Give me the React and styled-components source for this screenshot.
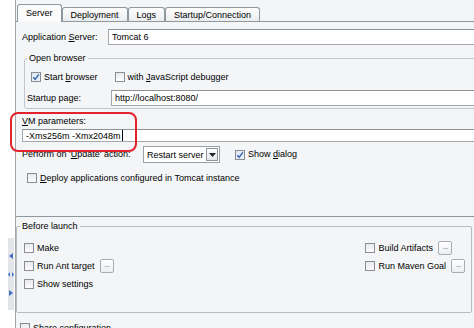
import React from "react";
import styled, { createGlobalStyle } from "styled-components";

const GlobalStyle = createGlobalStyle`
  html, body {
    margin: 0;
    padding: 0;
    background: #fff;
  }
  body {
    font-family: "Liberation Sans", Arial, sans-serif;
    font-size: 9px;
    color: #000;
  }
  * {
    box-sizing: border-box;
  }
`;

function Check({ checked }) {
  return (
    <Box $checked={checked}>
      {checked && (
        <svg width="8" height="8" viewBox="0 0 8 8">
          <path d="M1.2 4.2 L3.2 6.3 L6.9 1.4" fill="none" stroke="#3b6db0" strokeWidth="1.5" />
        </svg>
      )}
    </Box>
  );
}

function CheckItem({ checked, children }) {
  return (
    <Item>
      <Check checked={checked} />
      <span>{children}</span>
    </Item>
  );
}

function App() {
  return (
    <>
      <GlobalStyle />
      <Root>
        <Gutter>
          <SideStrip>
            <svg width="4" height="6" viewBox="0 0 4 6">
              <path d="M4 0 L0 3 L4 6 Z" fill="#3f72c8" />
            </svg>
            <svg width="6" height="5" viewBox="0 0 6 5">
              <path d="M0 2.5 L2 0 L2 5 Z M6 2.5 L4 0 L4 5 Z" fill="#3f72c8" />
            </svg>
            <svg width="4" height="6" viewBox="0 0 4 6">
              <path d="M0 0 L4 3 L0 6 Z" fill="#3f72c8" />
            </svg>
          </SideStrip>
        </Gutter>

        <Main>
          <TabBar>
            <Tab $active>Server</Tab>
            <Tab>Deployment</Tab>
            <Tab>Logs</Tab>
            <Tab>Startup/Connection</Tab>
          </TabBar>

          <TabPanel>
            <Row>
              <Label $width={86}>
                Application <U>S</U>erver:
              </Label>
              <TextField>Tomcat 6</TextField>
            </Row>

            <Group>
              <Legend>Open browser</Legend>
              <CheckLine>
                <CheckItem checked>
                  Start <U>b</U>rowser
                </CheckItem>
                <CheckItem>
                  with <U>J</U>avaScript debugger
                </CheckItem>
              </CheckLine>
              <Row $top={7}>
                <Label $width={84}>Startup page:</Label>
                <TextField>http://localhost:8080/</TextField>
              </Row>
            </Group>

            <VmSection>
              <Highlight />
              <Label>
                <U>V</U>M parameters:
              </Label>
              <TextField $top={2}>
                -Xms256m -Xmx2048m
                <Caret />
              </TextField>
            </VmSection>

            <Row $top={4}>
              <Label $width={121}>
                Perform on '<U>U</U>pdate' action:
              </Label>
              <Select>
                <span>Restart server</span>
                <DropButton>
                  <svg width="7" height="4" viewBox="0 0 7 4">
                    <path d="M0 0 L7 0 L3.5 4 Z" fill="#222" />
                  </svg>
                </DropButton>
              </Select>
              <Spacer $w={15} />
              <CheckItem checked>
                Show <U>d</U>ialog
              </CheckItem>
            </Row>

            <CheckLine $top={9} $left={5}>
              <CheckItem>
                <U>D</U>eploy applications configured in Tomcat instance
              </CheckItem>
            </CheckLine>
          </TabPanel>

          <LaunchGroup>
            <LaunchLegend>Before launch</LaunchLegend>
            <LaunchColumns>
              <LaunchCol>
                <LaunchItem>
                  <CheckItem>Make</CheckItem>
                </LaunchItem>
                <LaunchItem>
                  <CheckItem>Run Ant target</CheckItem>
                  <Dots>···</Dots>
                </LaunchItem>
                <LaunchItem>
                  <CheckItem>Show settings</CheckItem>
                </LaunchItem>
              </LaunchCol>
              <LaunchCol>
                <LaunchItem>
                  <CheckItem>Build Artifacts</CheckItem>
                  <Dots>···</Dots>
                </LaunchItem>
                <LaunchItem>
                  <CheckItem>Run Maven Goal</CheckItem>
                  <Dots>···</Dots>
                </LaunchItem>
              </LaunchCol>
            </LaunchColumns>
          </LaunchGroup>

          <CheckLine $top={9} $left={4}>
            <CheckItem>Share configuration</CheckItem>
          </CheckLine>
        </Main>
      </Root>
    </>
  );
}

const Root = styled.div`
  width: 474px;
  height: 328px;
  overflow: hidden;
  display: flex;
  background: #fff;
`;

const Gutter = styled.div`
  width: 16px;
  flex-shrink: 0;
  border-right: 1px solid #a3a6ab;
  padding: 238px 0 0 8px;
  background: #fff;
`;

const SideStrip = styled.div`
  width: 6px;
  height: 72px;
  background: #e3e5e9;
  display: flex;
  flex-direction: column;
  align-items: center;
  gap: 13px;
  padding-top: 15px;
`;

const Main = styled.div`
  flex: 1;
  min-width: 0;
  background: #f4f5f7;
`;

const TabBar = styled.div`
  display: flex;
  align-items: flex-end;
  height: 21px;
  padding-left: 1px;
`;

const Tab = styled.div`
  position: relative;
  z-index: ${(p) => (p.$active ? 2 : 1)};
  height: ${(p) => (p.$active ? "18px" : "14px")};
  margin-bottom: ${(p) => (p.$active ? "-1px" : "0")};
  padding: 0 8px ${(p) => (p.$active ? "2px" : "0")};
  display: flex;
  align-items: center;
  border: 1px solid #8e989f;
  border-bottom: none;
  border-radius: 3px 3px 0 0;
  background: ${(p) =>
    p.$active ? "#fbfbfc" : "linear-gradient(#fefefe, #ebecee)"};
  white-space: nowrap;
`;

const TabPanel = styled.div`
  width: 540px;
  height: 196px;
  border: 1px solid #8e989f;
  border-left: none;
  padding: 7px 0 0 6px;
  background: #f4f5f7;
`;

const Row = styled.div`
  display: flex;
  align-items: center;
  margin-top: ${(p) => p.$top || 0}px;
`;

const Label = styled.span`
  display: block;
  width: ${(p) => (p.$width ? `${p.$width}px` : "auto")};
  flex-shrink: 0;
  line-height: 11px;
  white-space: nowrap;
`;

const U = styled.span`
  text-decoration: underline;
`;

const TextField = styled.div`
  flex: 1;
  height: 16px;
  margin-top: ${(p) => p.$top || 0}px;
  display: flex;
  align-items: center;
  padding: 0 3px;
  background: #fff;
  border: 1px solid #a3a8ae;
  border-top-color: #8d9298;
  white-space: nowrap;
`;

const Caret = styled.span`
  display: inline-block;
  width: 1px;
  height: 11px;
  background: #000;
  margin-left: 1px;
`;

const Group = styled.fieldset`
  margin: 8px 0 0 2px;
  padding: 0 0 2px 2px;
  border: 1px solid #c3c7cd;
  border-radius: 3px;
`;

const Legend = styled.legend`
  padding: 0 2px;
  line-height: 11px;
`;

const CheckLine = styled.div`
  display: flex;
  align-items: center;
  gap: 17px;
  height: 12px;
  margin-top: ${(p) => (p.$top !== undefined ? p.$top : 7)}px;
  margin-left: ${(p) => (p.$left !== undefined ? p.$left : 4)}px;
`;

const Item = styled.label`
  display: flex;
  align-items: center;
  gap: 3px;
  white-space: nowrap;
  line-height: 11px;
`;

const Box = styled.span`
  width: 10px;
  height: 10px;
  flex-shrink: 0;
  display: flex;
  align-items: center;
  justify-content: center;
  border: 1px solid #8a8e94;
  background: ${(p) =>
    p.$checked ? "linear-gradient(#dfe8f4, #eef3fa)" : "linear-gradient(#e9eaec, #fdfdfd)"};
`;

const VmSection = styled.div`
  position: relative;
  margin-top: 7px;
  display: flex;
  flex-direction: column;
`;

const Highlight = styled.div`
  position: absolute;
  left: -12px;
  top: -4px;
  width: 127px;
  height: 40px;
  border: 2px solid #e3232c;
  border-radius: 8px;
  pointer-events: none;
  z-index: 3;
`;

const Select = styled.div`
  width: 77px;
  height: 17px;
  flex-shrink: 0;
  display: flex;
  align-items: center;
  justify-content: space-between;
  padding: 0 1px 0 3px;
  background: #fff;
  border: 1px solid #9ca1a7;
  white-space: nowrap;
`;

const DropButton = styled.span`
  width: 12px;
  height: 13px;
  display: flex;
  align-items: center;
  justify-content: center;
  border: 1px solid #8f959c;
  background: linear-gradient(#fdfdfd, #e3e5e8);
`;

const Spacer = styled.span`
  width: ${(p) => p.$w}px;
  flex-shrink: 0;
`;

const LaunchGroup = styled.fieldset`
  height: 92px;
  margin: 4px 2px 0 0;
  padding: 7px 6px 0 7px;
  border: 1px solid #b8bcc2;
  border-radius: 2px;
`;

const LaunchLegend = styled.legend`
  margin-left: -4px;
  padding: 0 2px;
  line-height: 11px;
`;

const LaunchColumns = styled.div`
  display: flex;
  justify-content: space-between;
`;

const LaunchCol = styled.div`
  display: flex;
  flex-direction: column;
`;

const LaunchItem = styled.div`
  height: 18px;
  display: flex;
  align-items: center;
  gap: 5px;
`;

const Dots = styled.span`
  width: 14px;
  height: 14px;
  display: flex;
  align-items: center;
  justify-content: center;
  border: 1px solid #a9adb3;
  border-radius: 2px;
  background: linear-gradient(#ffffff, #eceef0);
  color: #6a6e74;
  font-size: 8px;
  letter-spacing: -1px;
`;

export default App;
